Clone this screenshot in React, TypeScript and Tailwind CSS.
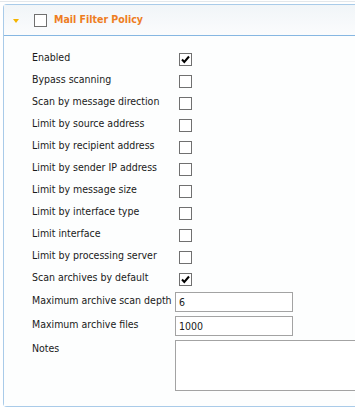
const checks: { label: string; checked: boolean }[] = [
  { label: "Enabled", checked: true },
  { label: "Bypass scanning", checked: false },
  { label: "Scan by message direction", checked: false },
  { label: "Limit by source address", checked: false },
  { label: "Limit by recipient address", checked: false },
  { label: "Limit by sender IP address", checked: false },
  { label: "Limit by message size", checked: false },
  { label: "Limit by interface type", checked: false },
  { label: "Limit interface", checked: false },
  { label: "Limit by processing server", checked: false },
  { label: "Scan archives by default", checked: true },
];

function Box({ checked, className = "" }: { checked?: boolean; className?: string }) {
  return (
    <span
      className={`flex h-[13px] w-[13px] shrink-0 items-center justify-center border border-[#707070] bg-white ${className}`}
    >
      {checked && (
        <svg width="9" height="9" viewBox="0 0 9 9">
          <path d="M1 4.5 L3.3 7 L8 1.5" fill="none" stroke="#000" strokeWidth="2" />
        </svg>
      )}
    </span>
  );
}

export default function App() {
  return (
    <div
      className="h-[413px] w-[355px] overflow-hidden bg-white pt-px text-[10.5px] text-[#1a1a1a]"
      style={{ fontFamily: '"DejaVu Sans Condensed", "Liberation Sans", sans-serif' }}
    >
      <div className="h-px bg-[#e3e7eb]" />
      <div className="ml-[3px] mt-[2px] rounded-l-[4px] border-y border-l border-[#a9cbe9]">
        {/* Header */}
        <div className="flex h-[31px] items-center border-b border-[#86b7e2] bg-gradient-to-b from-[#f1f5f8] to-[#fbfcfd]">
          <svg width="6" height="4" viewBox="0 0 6 4" className="ml-[9px] mt-[1px] shrink-0">
            <path d="M0 0 H6 L3 4 Z" fill="#f5b400" />
          </svg>
          <Box className="ml-[15px] border-[#6a6a6a]" />
          <span className="ml-[7px] whitespace-nowrap text-[10.5px] font-bold text-[#ee7d22]">Mail Filter Policy</span>
        </div>

        {/* Body */}
        <div className="bg-[#fdfefe] pb-[15px] pl-[28px] pt-[11px]">
          {checks.map((c) => (
            <div key={c.label} className="flex h-[22px] items-center">
              <span className="w-[147px] shrink-0 whitespace-nowrap">{c.label}</span>
              <Box checked={c.checked} className="mt-[3px]" />
            </div>
          ))}
          <div className="mt-[3px] flex h-[24px] items-start">
            <span className="w-[143px] shrink-0 whitespace-nowrap pt-[1px]">Maximum archive scan depth</span>
            <input
              defaultValue="6"
              className="h-[20px] w-[118px] shrink-0 border border-[#a3a3a3] bg-white px-[3px] text-[10.5px] outline-none"
            />
          </div>
          <div className="flex h-[24px] items-start">
            <span className="w-[143px] shrink-0 whitespace-nowrap pt-[1px]">Maximum archive files</span>
            <input
              defaultValue="1000"
              className="h-[20px] w-[118px] shrink-0 border border-[#a3a3a3] bg-white px-[3px] text-[10.5px] outline-none"
            />
          </div>
          <div className="flex items-start">
            <span className="w-[143px] shrink-0 whitespace-nowrap pt-[1px]">Notes</span>
            <textarea className="h-[51px] w-[200px] shrink-0 resize-none border border-[#a3a3a3] bg-white outline-none" />
          </div>
        </div>
      </div>
    </div>
  );
}
